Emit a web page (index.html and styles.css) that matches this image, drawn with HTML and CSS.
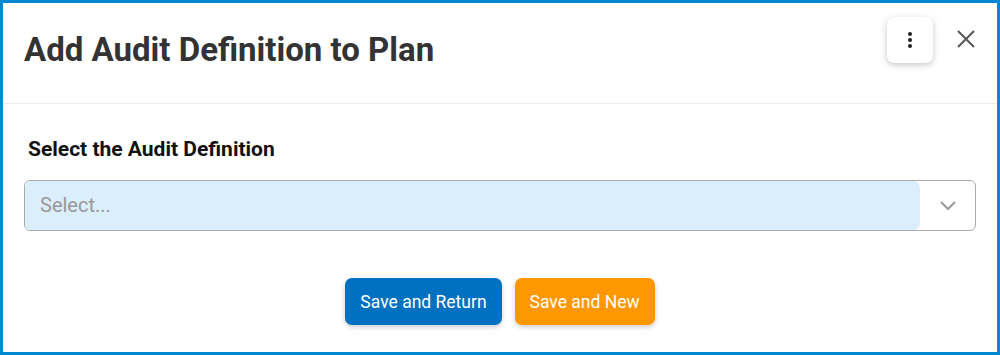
FILE: index.html
```html
<!DOCTYPE html>
<html>
<head>
<meta charset="utf-8">
<link rel="stylesheet" href="styles.css">
</head>
<body>
<div class="dialog">
  <header class="dialog-header">
    <h1 class="dialog-title">Add Audit Definition to Plan</h1>
    <div class="header-actions">
      <button class="kebab-btn" aria-label="More">
        <svg width="16" height="20" viewBox="0 0 16 20"><circle cx="8" cy="4" r="2" fill="#222"/><circle cx="8" cy="10" r="2" fill="#222"/><circle cx="8" cy="16" r="2" fill="#222"/></svg>
      </button>
      <button class="close-btn" aria-label="Close">
        <svg width="22" height="22" viewBox="0 0 22 22"><path d="M3 3 L19 19 M19 3 L3 19" stroke="#555" stroke-width="2" fill="none"/></svg>
      </button>
    </div>
  </header>
  <main class="dialog-body">
    <label class="field-label">Select the Audit Definition</label>
    <div class="select">
      <div class="select-value">Select...</div>
      <div class="select-indicator">
        <svg width="20" height="12" viewBox="0 0 20 12"><path d="M3 2 L10 9 L17 2" stroke="#999" stroke-width="2" fill="none"/></svg>
      </div>
    </div>
    <div class="actions">
      <button class="btn btn-primary">Save and Return</button>
      <button class="btn btn-warning">Save and New</button>
    </div>
  </main>
</div>
</body>
</html>
```

FILE: styles.css
```css
* { box-sizing: border-box; }
html, body { margin: 0; padding: 0; }
body {
  font-family: Roboto, "Liberation Sans", sans-serif;
  background: #fff;
}
.dialog {
  width: 1000px;
  height: 355px;
  border: 3px solid #0288d1;
  background: #fff;
  display: flex;
  flex-direction: column;
}
.dialog-header {
  height: 101px;
  border-bottom: 1px solid #ececec;
  display: flex;
  align-items: flex-start;
  justify-content: space-between;
  padding: 0 0 0 21px;
}
.dialog-title {
  margin: 27px 0 0 0;
  font-size: 33px;
  font-weight: 700;
  color: #333;
  line-height: 40px;
}
.header-actions {
  display: flex;
  align-items: center;
  gap: 22px;
  margin-top: 14px;
  padding-right: 20px;
}
.kebab-btn {
  width: 46px;
  height: 46px;
  border: none;
  border-radius: 7px;
  background: #fff;
  box-shadow: 0 2px 6px rgba(0,0,0,0.22);
  display: flex;
  align-items: center;
  justify-content: center;
  padding: 0;
}
.close-btn {
  border: none;
  background: none;
  padding: 0;
  width: 22px;
  height: 22px;
  display: flex;
  margin-top: -2px;
}
.dialog-body {
  padding: 33px 21px 0 21px;
  display: flex;
  flex-direction: column;
}
.field-label {
  font-size: 21px;
  font-weight: 700;
  color: #111;
  padding-left: 4px;
  line-height: 24px;
}
.select {
  margin-top: 19px;
  height: 51px;
  border: 1px solid #aaa;
  border-radius: 6px;
  display: flex;
  overflow: hidden;
}
.select-value {
  flex: 1;
  background: #dbeefc;
  border-radius: 0 7px 7px 0;
  color: #999;
  font-size: 20px;
  display: flex;
  align-items: center;
  padding-left: 15px;
  padding-bottom: 1px;
}
.select-indicator {
  width: 55px;
  display: flex;
  align-items: center;
  justify-content: center;
}
.actions {
  display: flex;
  justify-content: center;
  gap: 13px;
  margin-top: 47px;
  padding-left: 0;
}
.btn {
  height: 47px;
  border: none;
  border-radius: 7px;
  color: #fff;
  font-family: Roboto, "Liberation Sans", sans-serif;
  font-size: 17.5px;
  padding: 0 15px;
  box-shadow: 0 2px 5px rgba(0,0,0,0.2);
}
.btn-primary { background: #0070c0; }
.btn-warning { background: #ff9800; }
```
